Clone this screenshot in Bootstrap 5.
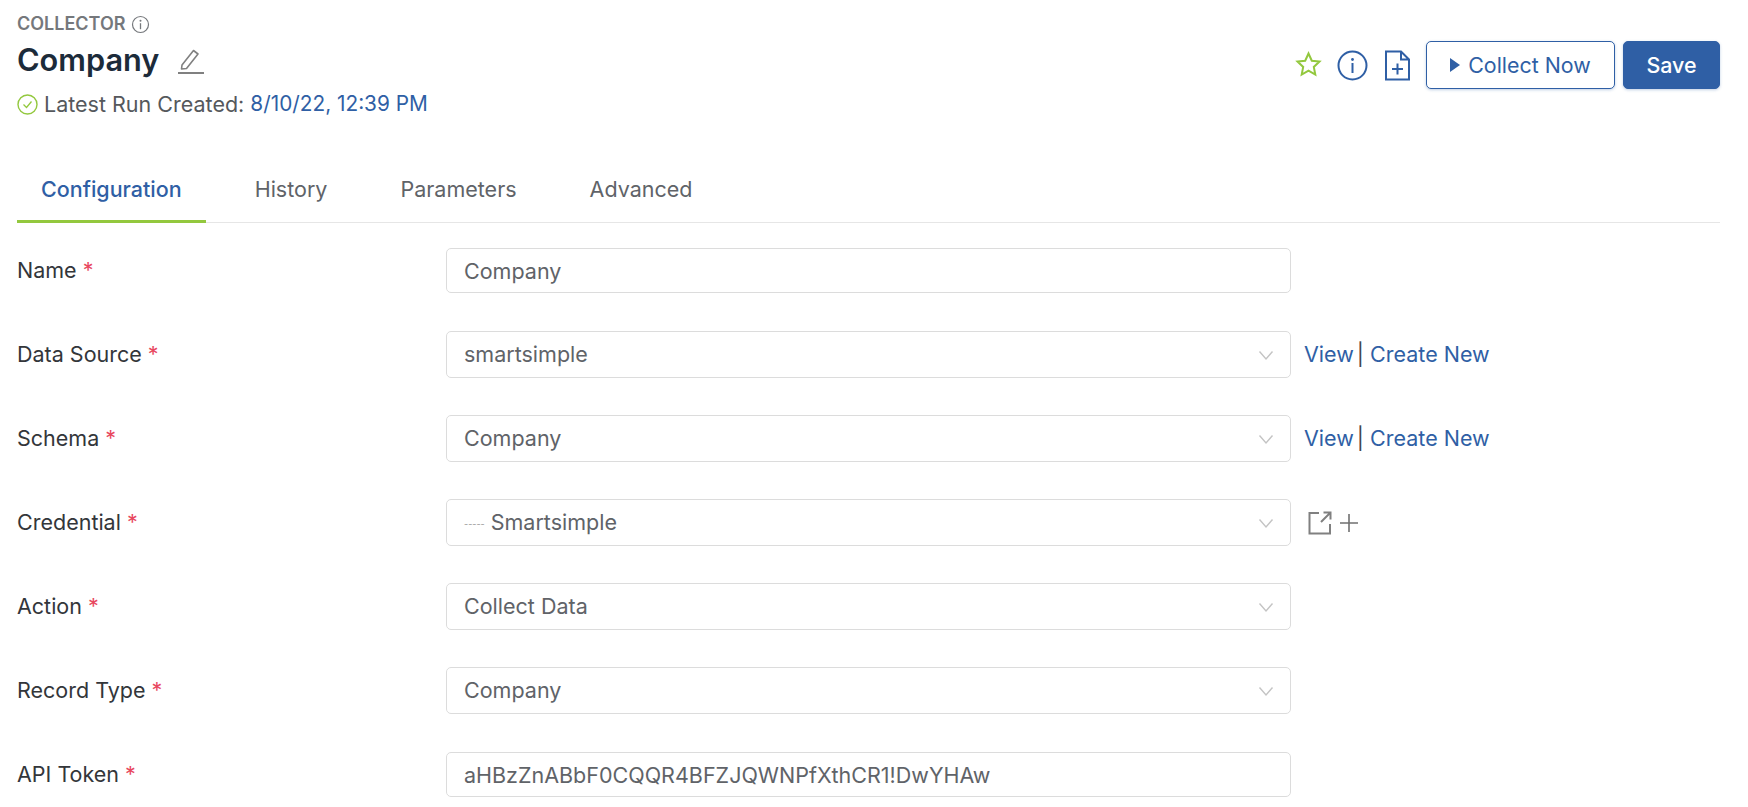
<!DOCTYPE html>
<html lang="en">
<head>
    <meta charset="UTF-8">
    <meta name="viewport" content="width=device-width, initial-scale=1.0">
    <title>Collector | Company</title>
    <link href="https://cdn.jsdelivr.net/npm/bootstrap@5.3.2/dist/css/bootstrap.min.css" rel="stylesheet">
    <style>
        body {
            font-family: Inter, "Liberation Sans", sans-serif;
            font-size: 21.5px;
            color: #55585c;
            background: #fff;
            overflow: hidden;
        }
        .page-wrap { padding: 13px 28px 0 17px; }
        .page-head { height: 113px; }
        .kicker { font-size: 18px; font-weight: 600; color: #75787c; line-height: 22px; gap: 5px; }
        .page-title { font-size: 30.7px; font-weight: 600; color: #1c2b3a; line-height: 40px; margin: 5px 0 11px; }
        .edit-icon { margin-left: 18px; }
        .run-line { font-size: 21.5px; line-height: 26px; }
        .run-icon { margin-right: 6px; }
        .run-date { color: #2f5fa5; font-size: 20.8px; }
        .head-actions { padding-top: 28px; }
        .btn-collect, .btn-save { height: 48px; font-size: 21.4px; font-weight: 400; border-radius: 5px; box-shadow: 0 1px 3px rgba(47, 95, 165, .3); }
        .btn-collect { width: 189px; color: #2f5fa5; background: #fff; border: 1px solid #2f5fa5; }
        .btn-save { width: 97px; color: #fff; background: #2f5fa5; border: 1px solid #2f5fa5; font-weight: 500; }
        .btn-collect:hover { color: #2f5fa5; background: #fff; border-color: #2f5fa5; }
        .icon-star { margin: 10px 15px 0 0; }
        .icon-info { margin: 9px 16px 0 0; }
        .icon-doc { margin: 9px 15px 0 0; }
        .tab-bar { margin-top: 36px; gap: 25px; border-bottom: 1px solid #e6e6e6; height: 61px; }
        .tab-bar .nav-link { font-size: 21.5px; color: #606368; padding: 0 24px; height: 61px; line-height: 54px; border-bottom: 3px solid transparent; margin: 0; }
        .tab-bar .nav-link.active { color: #2f5fa5; font-weight: 500; border-bottom-color: #93c83e; }
        .form-area { padding-top: 24px; }
        .field-row { height: 84px; }
        .field-label { width: 429px; font-size: 21.5px; font-weight: 400; color: #33363a; margin: 0; line-height: 47px; }
        .req { color: #e8485f; }
        .field-box { width: 845px; height: 47px; font-size: 21.5px; color: #606368; border: 1px solid #dcdcdc; border-radius: 5px; padding: 0 17px; line-height: 45px; box-shadow: none; }
        .field-box.is-input { height: 45px; line-height: 43px; margin-top: 1px; }
        .field-box.form-select {
            background-size: 18px 18px;
            background-position: right 15px center;
            background-image: url("data:image/svg+xml,%3csvg xmlns='http://www.w3.org/2000/svg' viewBox='0 0 18 18'%3e%3cpath fill='none' stroke='%23c4c4c4' stroke-width='1.4' d='M2.500 5.500 9 13l6.500-7.500'/%3e%3c/svg%3e");
        }
        .dash-mark { font-size: 9px; color: #999; vertical-align: 3px; margin-right: 6px; }
        .side-links { margin-left: 13px; font-size: 21.5px; font-weight: 400; line-height: 47px; color: #2f5fa5; }
        .side-links a { color: #2f5fa5; text-decoration: none; }
        .side-links span { color: #44474b; margin-left: -3px; }
        .side-icons { margin-left: 17px; height: 47px; gap: 7px; }
    </style>
</head>
<body>
    <div class="page-wrap">
        <div class="page-head d-flex justify-content-between">
            <div>
                <div class="kicker d-flex align-items-center">COLLECTOR
                    <svg width="19" height="19" viewBox="0 0 19 19"><circle cx="9.500" cy="9.500" r="8" fill="none" stroke="#75787c" stroke-width="1.200"/><circle cx="9.500" cy="5.800" r="1" fill="#75787c"/><path d="M9.500 8.200v6" stroke="#75787c" stroke-width="1.300"/></svg>
                </div>
                <div class="page-title d-flex align-items-center">Company
                    <svg class="edit-icon" width="28" height="28" viewBox="0 0 28 28"><path d="M5 19 16.500 4.500 l4.500 3.500L9.500 22.500 4.500 23z" fill="none" stroke="#808080" stroke-width="1.600" stroke-linejoin="round"/><path d="M1 27h26" stroke="#808080" stroke-width="2"/></svg>
                </div>
                <div class="run-line d-flex align-items-center">
                    <svg class="run-icon" width="21" height="21" viewBox="0 0 21 21"><circle cx="10.500" cy="10.500" r="9.500" fill="none" stroke="#93c83e" stroke-width="1.400"/><path d="M6.500 10.500l3 3 5-6" fill="none" stroke="#93c83e" stroke-width="1.300"/></svg>
                    <span>Latest Run Created:&nbsp;</span><span class="run-date">8/10/22, 12:39 PM</span>
                </div>
            </div>
            <div class="head-actions d-flex align-items-start">
                <svg class="icon-star" width="27" height="27" viewBox="0 0 27 27"><path d="M13.500 2.500l3.300 7.200 7.700.9-5.700 5.300 1.500 7.700-6.800-3.900-6.800 3.900 1.500-7.700-5.700-5.300 7.700-.9z" fill="none" stroke="#93c83e" stroke-width="2"/></svg>
                <svg class="icon-info" width="31" height="31" viewBox="0 0 31 31"><circle cx="15.500" cy="15.500" r="14" fill="none" stroke="#2f5fa5" stroke-width="2"/><circle cx="15.500" cy="9.500" r="1.400" fill="#2f5fa5"/><path d="M15.500 13v10" stroke="#2f5fa5" stroke-width="2"/></svg>
                <svg class="icon-doc" width="27" height="31" viewBox="0 0 27 31"><path d="M2 1.500h15l8 8v20H2z M17 1.500v8h8" fill="none" stroke="#2f5fa5" stroke-width="2"/><path d="M13.500 13.500v11M8 19h11" stroke="#2f5fa5" stroke-width="2"/></svg>
                <button type="button" class="btn btn-collect d-flex align-items-center justify-content-center gap-2">
                    <svg width="10" height="14" viewBox="0 0 10 14"><path d="M0 0l10 7-10 7z" fill="#2f5fa5"/></svg>Collect Now
                </button>
                <button type="button" class="btn btn-save ms-2">Save</button>
            </div>
        </div>

        <ul class="nav tab-bar">
            <li class="nav-item"><a class="nav-link active" href="#">Configuration</a></li>
            <li class="nav-item"><a class="nav-link" href="#">History</a></li>
            <li class="nav-item"><a class="nav-link" href="#">Parameters</a></li>
            <li class="nav-item"><a class="nav-link" href="#">Advanced</a></li>
        </ul>

        <form class="form-area">
            <div class="field-row d-flex align-items-start">
                <label class="field-label">Name <span class="req">*</span></label>
                <input class="form-control field-box is-input" type="text" value="Company">
            </div>
            <div class="field-row d-flex align-items-start">
                <label class="field-label">Data Source <span class="req">*</span></label>
                <div class="form-select field-box">smartsimple</div>
                <div class="side-links"><a href="#">View</a> <span>|</span> <a href="#">Create New</a></div>
            </div>
            <div class="field-row d-flex align-items-start">
                <label class="field-label">Schema <span class="req">*</span></label>
                <div class="form-select field-box">Company</div>
                <div class="side-links"><a href="#">View</a> <span>|</span> <a href="#">Create New</a></div>
            </div>
            <div class="field-row d-flex align-items-start">
                <label class="field-label">Credential <span class="req">*</span></label>
                <div class="form-select field-box"><span class="dash-mark">-----</span>Smartsimple</div>
                <div class="side-icons d-flex align-items-center">
                    <svg width="24" height="24" viewBox="0 0 24 24"><path d="M11 2H1.500v20.500H22V13M13 11 22 2M15.500 1.500h7v7" fill="none" stroke="#808080" stroke-width="2"/></svg>
                    <svg width="20" height="20" viewBox="0 0 20 20"><path d="M10 1v18M1 10h18" stroke="#707070" stroke-width="1.600"/></svg>
                </div>
            </div>
            <div class="field-row d-flex align-items-start">
                <label class="field-label">Action <span class="req">*</span></label>
                <div class="form-select field-box">Collect Data</div>
            </div>
            <div class="field-row d-flex align-items-start">
                <label class="field-label">Record Type <span class="req">*</span></label>
                <div class="form-select field-box">Company</div>
            </div>
            <div class="field-row d-flex align-items-start">
                <label class="field-label">API Token <span class="req">*</span></label>
                <input class="form-control field-box is-input" type="text" value="aHBzZnABbF0CQQR4BFZJQWNPfXthCR1!DwYHAw">
            </div>
        </form>
    </div>
    <script src="https://cdn.jsdelivr.net/npm/bootstrap@5.3.2/dist/js/bootstrap.bundle.min.js"></script>
</body>
</html>
